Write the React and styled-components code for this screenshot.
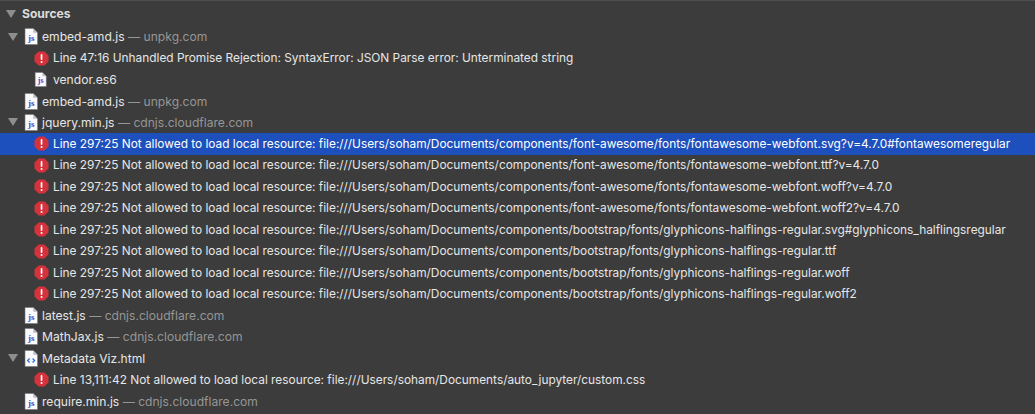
import React from 'react';
import styled, { createGlobalStyle } from 'styled-components';

const GlobalStyle = createGlobalStyle`
  html, body {
    margin: 0;
    height: 100%;
    overflow: hidden;
    background: #3c3c3c;
  }
`;

const Panel = styled.div`
  width: 1035px;
  height: 414px;
  overflow: hidden;
  box-sizing: border-box;
  border-top: 1px solid #4f4f4f;
  background: #3c3c3c;
  font-family: Inter, "Liberation Sans", sans-serif;
  font-size: 12.1px;
  color: #e6e6e6;
`;

const Header = styled.div`
  display: flex;
  align-items: center;
  height: 25px;
  padding-left: 6px;
  gap: 6px;
  font-weight: 700;
  color: #dcdcdc;
`;

const RowWrap = styled.div`
  display: flex;
  align-items: center;
  height: 21.44px;
  white-space: nowrap;
  padding-left: ${p => p.$indent}px;
  background: ${p => (p.$selected ? '#1d50bd' : 'transparent')};
  color: ${p => (p.$selected ? '#ffffff' : '#e6e6e6')};
  font-size: ${p => (p.$message ? '11.86px' : 'inherit')};
`;

const Slot = styled.span`
  display: flex;
  align-items: center;
  width: 16px;
  flex: none;
`;

const Host = styled.span`
  color: #969696;
`;

const Label = styled.span`
  margin-left: ${p => p.$gap}px;
`;

const Triangle = () => (
  <svg width="10" height="8" viewBox="0 0 10 8">
    <path d="M0 0H10L5 8Z" fill="#8e8e8e" />
  </svg>
);

const FileIcon = ({ kind = 'js', small }) => (
  <svg width={small ? 13 : 14} height={small ? 15 : 17} viewBox="0 0 14 17" style={{ flex: 'none' }}>
    <path d="M1 .5H9.2L13.5 4.8V16.5H1Z" fill="#fafafc" stroke="#77777d" strokeWidth=".6" />
    <path d="M9.2 .5V4.8H13.5Z" fill="#bdbdc6" />
    {kind === 'js' ? (
      <text x="7.2" y="13" textAnchor="middle" fontSize="9" fontWeight="700" fontFamily="Liberation Serif, serif" fill="#4a3fc4">js</text>
    ) : (
      <path d="M5.6 8.5 3.6 10.5 5.6 12.5M8.6 8.5 10.6 10.5 8.6 12.5" fill="none" stroke="#2468e0" strokeWidth="1.2" />
    )}
  </svg>
);

const ErrorIcon = () => (
  <svg width="15" height="15" viewBox="0 0 15 15" style={{ flex: 'none' }}>
    <path d="M4.6 .5H10.4L14.5 4.6V10.4L10.4 14.5H4.6L.5 10.4V4.6Z" fill="#d4333c" />
    <rect x="6.7" y="3" width="1.7" height="6" rx=".8" fill="#fff" />
    <circle cx="7.55" cy="11" r="1" fill="#fff" />
  </svg>
);

const FileRow = ({ name, host, open, kind }) => (
  <RowWrap $indent={8}>
    <Slot>{open && <Triangle />}</Slot>
    <FileIcon kind={kind} />
    <Label $gap={4}>
      {name}
      {host && <Host> — {host}</Host>}
    </Label>
  </RowWrap>
);

const ErrorRow = ({ text, selected }) => (
  <RowWrap $indent={34} $selected={selected} $message>
    <ErrorIcon />
    <Label $gap={4}>{text}</Label>
  </RowWrap>
);

const base = 'Not allowed to load local resource: file:///Users/soham/Documents';
const fa = `Line 297:25 ${base}/components/font-awesome/fonts/fontawesome-webfont`;
const gl = `Line 297:25 ${base}/components/bootstrap/fonts/glyphicons-halflings-regular`;

export default function App() {
  return (
    <>
      <GlobalStyle />
      <Panel>
        <Header>
          <Triangle />
          Sources
        </Header>
        <FileRow open name="embed-amd.js" host="unpkg.com" />
        <ErrorRow text="Line 47:16 Unhandled Promise Rejection: SyntaxError: JSON Parse error: Unterminated string" />
        <RowWrap $indent={34}>
          <FileIcon small />
          <Label $gap={6}>vendor.es6</Label>
        </RowWrap>
        <FileRow name="embed-amd.js" host="unpkg.com" />
        <FileRow open name="jquery.min.js" host="cdnjs.cloudflare.com" />
        <ErrorRow selected text={`${fa}.svg?v=4.7.0#fontawesomeregular`} />
        <ErrorRow text={`${fa}.ttf?v=4.7.0`} />
        <ErrorRow text={`${fa}.woff?v=4.7.0`} />
        <ErrorRow text={`${fa}.woff2?v=4.7.0`} />
        <ErrorRow text={`${gl}.svg#glyphicons_halflingsregular`} />
        <ErrorRow text={`${gl}.ttf`} />
        <ErrorRow text={`${gl}.woff`} />
        <ErrorRow text={`${gl}.woff2`} />
        <FileRow name="latest.js" host="cdnjs.cloudflare.com" />
        <FileRow name="MathJax.js" host="cdnjs.cloudflare.com" />
        <FileRow open kind="html" name="Metadata Viz.html" />
        <ErrorRow text={`Line 13,111:42 ${base}/auto_jupyter/custom.css`} />
        <FileRow name="require.min.js" host="cdnjs.cloudflare.com" />
      </Panel>
    </>
  );
}
